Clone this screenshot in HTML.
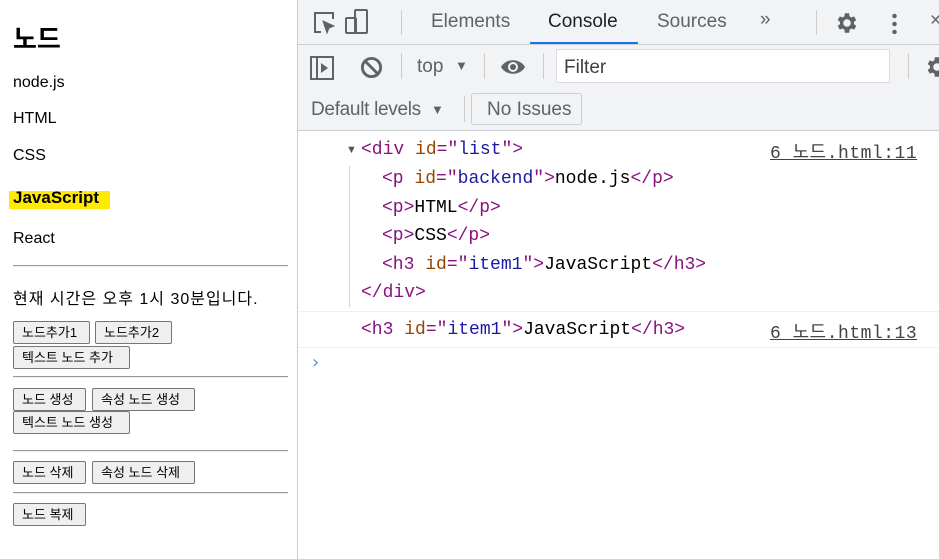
<!DOCTYPE html>
<html><head><meta charset="utf-8"><style>
*{margin:0;padding:0;box-sizing:border-box}
body{width:939px;height:559px;overflow:hidden;position:relative;background:#fff;font-family:"Liberation Sans","Noto Sans CJK KR",sans-serif;color:#000}
.a{position:absolute;white-space:nowrap}
.t{font-size:16px}
.btn{position:absolute;height:23px;border:1px solid #767676;border-radius:2px;background:#efefef;font-size:13px;line-height:21px;padding:0 8px;font-family:"Liberation Sans","Noto Sans CJK KR",sans-serif}
.hr{position:absolute;left:13px;width:275px;height:2px;border-top:1px solid #9a9a9a;border-bottom:1px solid #eee}
#dt{position:absolute;left:297px;top:0;width:642px;height:559px;border-left:1px solid #ccc;background:#fff}
.bar{position:absolute;left:0;width:642px;background:#f1f3f4}
.ui{font-family:"Liberation Sans",sans-serif;color:#5f6368;font-size:19px}
.m{font-family:"Liberation Mono","DejaVu Sans Mono","Noto Sans CJK KR",monospace;font-size:18px;position:absolute;white-space:nowrap}
.tg{color:#881280}.at{color:#994500}.v{color:#1a1aa6}
.ln{color:#444;text-decoration:underline;letter-spacing:0.5px}
</style></head><body>
<div class="a" style="left:13px;top:19px;font-size:26px;font-weight:bold">노드</div>
<div class="a t" style="left:13px;top:74px">node.js</div>
<div class="a t" style="left:13px;top:110px">HTML</div>
<div class="a t" style="left:13px;top:147px">CSS</div>
<div class="a" style="left:9px;top:191px;width:101px;height:18px;background:#ffeb00"></div>
<div class="a" style="left:13px;top:188px;font-size:17px;font-weight:bold">JavaScript</div>
<div class="a t" style="left:13px;top:230px">React</div>
<div class="hr" style="top:265px"></div>
<div class="a" style="left:13px;top:285px;font-size:16px;letter-spacing:1px">현재 시간은 오후 1시 30분입니다.</div>
<div class="btn" style="left:13px;top:321px;width:77px">노드추가1</div>
<div class="btn" style="left:95px;top:321px;width:77px">노드추가2</div>
<div class="btn" style="left:13px;top:346px;width:117px">텍스트 노드 추가</div>
<div class="hr" style="top:376px"></div>
<div class="btn" style="left:13px;top:388px;width:73px">노드 생성</div>
<div class="btn" style="left:92px;top:388px;width:103px">속성 노드 생성</div>
<div class="btn" style="left:13px;top:411px;width:117px">텍스트 노드 생성</div>
<div class="hr" style="top:450px"></div>
<div class="btn" style="left:13px;top:461px;width:73px">노드 삭제</div>
<div class="btn" style="left:92px;top:461px;width:103px">속성 노드 삭제</div>
<div class="hr" style="top:492px"></div>
<div class="btn" style="left:13px;top:503px;width:73px">노드 복제</div>

<div id="dt">
<div class="bar" style="top:0;height:45px;border-bottom:1px solid #cacdd1"></div>
<svg class="a" style="left:14px;top:10px" width="26" height="26" viewBox="0 0 26 26" fill="none" stroke="#5f6368" stroke-width="2"><path d="M9 22H3V3h18v6"/><path d="M11 11l4 12 2-5 5-2z" fill="#5f6368" stroke-width="1"/></svg>
<svg class="a" style="left:46px;top:8px" width="26" height="28" viewBox="0 0 26 28" fill="none" stroke="#5f6368" stroke-width="2"><rect x="11" y="2" width="12" height="23" rx="1"/><rect x="2" y="10" width="10" height="15" rx="1"/></svg>
<div class="a" style="left:103px;top:10px;width:1px;height:25px;background:#ccc"></div>
<div class="a ui" style="left:133px;top:11px">Elements</div>
<div class="a ui" style="left:250px;top:11px;color:#202124">Console</div>
<div class="a" style="left:232px;top:42px;width:108px;height:2px;background:#1a73e8"></div>
<div class="a ui" style="left:359px;top:11px">Sources</div>
<div class="a ui" style="left:462px;top:9px">»</div>
<div class="a" style="left:518px;top:10px;width:1px;height:25px;background:#ccc"></div>
<svg class="a" style="left:536px;top:10px" width="26" height="26" viewBox="0 0 24 24"><path fill="#5f6368" d="M19.4 13a7.5 7.5 0 000-2l2.1-1.6-2-3.5-2.5 1a7 7 0 00-1.7-1L15 3h-4l-.4 2.9a7 7 0 00-1.7 1l-2.5-1-2 3.5L6.6 11a7.5 7.5 0 000 2l-2.2 1.6 2 3.5 2.5-1a7 7 0 001.7 1L11 21h4l.4-2.9a7 7 0 001.7-1l2.5 1 2-3.5zM13 15.5a3.5 3.5 0 110-7 3.5 3.5 0 010 7z" transform="translate(-1 0)"/></svg>
<div class="a" style="left:594px;top:12px;width:5px;height:22px;background:radial-gradient(circle,#5f6368 2px,transparent 2.5px) 0 0/5px 8px"></div>
<div class="a ui" style="left:632px;top:10px">×</div>

<div class="bar" style="top:45px;height:86px;border-bottom:1px solid #cacdd1"></div>
<svg class="a" style="left:12px;top:56px" width="24" height="24" viewBox="0 0 24 24" fill="none" stroke="#5f6368" stroke-width="2"><rect x="1" y="1" width="22" height="22"/><path d="M7 1v22"/><path d="M11 7l7 5-7 5z" fill="#5f6368" stroke="none"/></svg>
<svg class="a" style="left:62px;top:56px" width="23" height="23" viewBox="0 0 24 24" fill="none" stroke="#5f6368" stroke-width="3"><circle cx="12" cy="12" r="9.5"/><path d="M5 5l14 14"/></svg>
<div class="a" style="left:103px;top:53px;width:1px;height:26px;background:#ccc"></div>
<div class="a ui" style="left:119px;top:56px">top</div>
<div class="a" style="left:157px;top:58px;font-size:13px;color:#5f6368">▼</div>
<div class="a" style="left:186px;top:53px;width:1px;height:26px;background:#ccc"></div>
<svg class="a" style="left:202px;top:57px" width="26" height="20" viewBox="0 0 26 20"><path d="M1 10C6 1 20 1 25 10C20 19 6 19 1 10z" fill="#5f6368"/><circle cx="13" cy="10" r="5" fill="#f1f3f4"/><circle cx="13" cy="10" r="3" fill="#5f6368"/></svg>
<div class="a" style="left:245px;top:53px;width:1px;height:26px;background:#ccc"></div>
<div class="a" style="left:258px;top:49px;width:334px;height:34px;background:#fff;border:1px solid #dadce0"></div>
<div class="a ui" style="left:266px;top:57px;color:#3c4043">Filter</div>
<div class="a" style="left:610px;top:53px;width:1px;height:26px;background:#ccc"></div>
<svg class="a" style="left:626px;top:54px" width="26" height="26" viewBox="0 0 24 24"><path fill="#5f6368" d="M19.4 13a7.5 7.5 0 000-2l2.1-1.6-2-3.5-2.5 1a7 7 0 00-1.7-1L15 3h-4l-.4 2.9a7 7 0 00-1.7 1l-2.5-1-2 3.5L6.6 11a7.5 7.5 0 000 2l-2.2 1.6 2 3.5 2.5-1a7 7 0 001.7 1L11 21h4l.4-2.9a7 7 0 001.7-1l2.5 1 2-3.5zM13 15.5a3.5 3.5 0 110-7 3.5 3.5 0 010 7z" transform="translate(-1 0)"/></svg>
<div class="a ui" style="left:13px;top:99px;letter-spacing:-0.3px">Default levels</div>
<div class="a" style="left:133px;top:102px;font-size:13px;color:#5f6368">▼</div>
<div class="a" style="left:166px;top:96px;width:1px;height:26px;background:#ccc"></div>
<div class="a" style="left:173px;top:93px;width:111px;height:32px;border:1px solid #cacdd1;border-radius:3px"></div>
<div class="a ui" style="left:189px;top:99px">No Issues</div>

<div class="a" style="left:48px;top:144px;font-size:11px;color:#555">▼</div>
<div class="m" style="left:63px;top:140px"><span class="tg">&lt;div</span> <span class="at">id</span><span class="tg">="</span><span class="v">list</span><span class="tg">"&gt;</span></div>
<div class="m ln" style="left:472px;top:138px">6_노드.html:11</div>
<div class="a" style="left:51px;top:166px;width:1px;height:141px;background:#c8d4ea"></div>
<div class="m" style="left:84px;top:169px"><span class="tg">&lt;p</span> <span class="at">id</span><span class="tg">="</span><span class="v">backend</span><span class="tg">"&gt;</span>node.js<span class="tg">&lt;/p&gt;</span></div>
<div class="m" style="left:84px;top:198px"><span class="tg">&lt;p&gt;</span>HTML<span class="tg">&lt;/p&gt;</span></div>
<div class="m" style="left:84px;top:226px"><span class="tg">&lt;p&gt;</span>CSS<span class="tg">&lt;/p&gt;</span></div>
<div class="m" style="left:84px;top:255px"><span class="tg">&lt;h3</span> <span class="at">id</span><span class="tg">="</span><span class="v">item1</span><span class="tg">"&gt;</span>JavaScript<span class="tg">&lt;/h3&gt;</span></div>
<div class="m" style="left:63px;top:283px"><span class="tg">&lt;/div&gt;</span></div>
<div class="a" style="left:0;top:311px;width:642px;height:1px;background:#f0f0f0"></div>
<div class="m" style="left:63px;top:320px"><span class="tg">&lt;h3</span> <span class="at">id</span><span class="tg">="</span><span class="v">item1</span><span class="tg">"&gt;</span>JavaScript<span class="tg">&lt;/h3&gt;</span></div>
<div class="m ln" style="left:472px;top:318px">6_노드.html:13</div>
<div class="a" style="left:0;top:347px;width:642px;height:1px;background:#f0f0f0"></div>
<div class="a" style="left:14px;top:352px;font-size:18px;color:#5a8be0;font-family:'DejaVu Sans'">›</div>
</div>
</body></html>
